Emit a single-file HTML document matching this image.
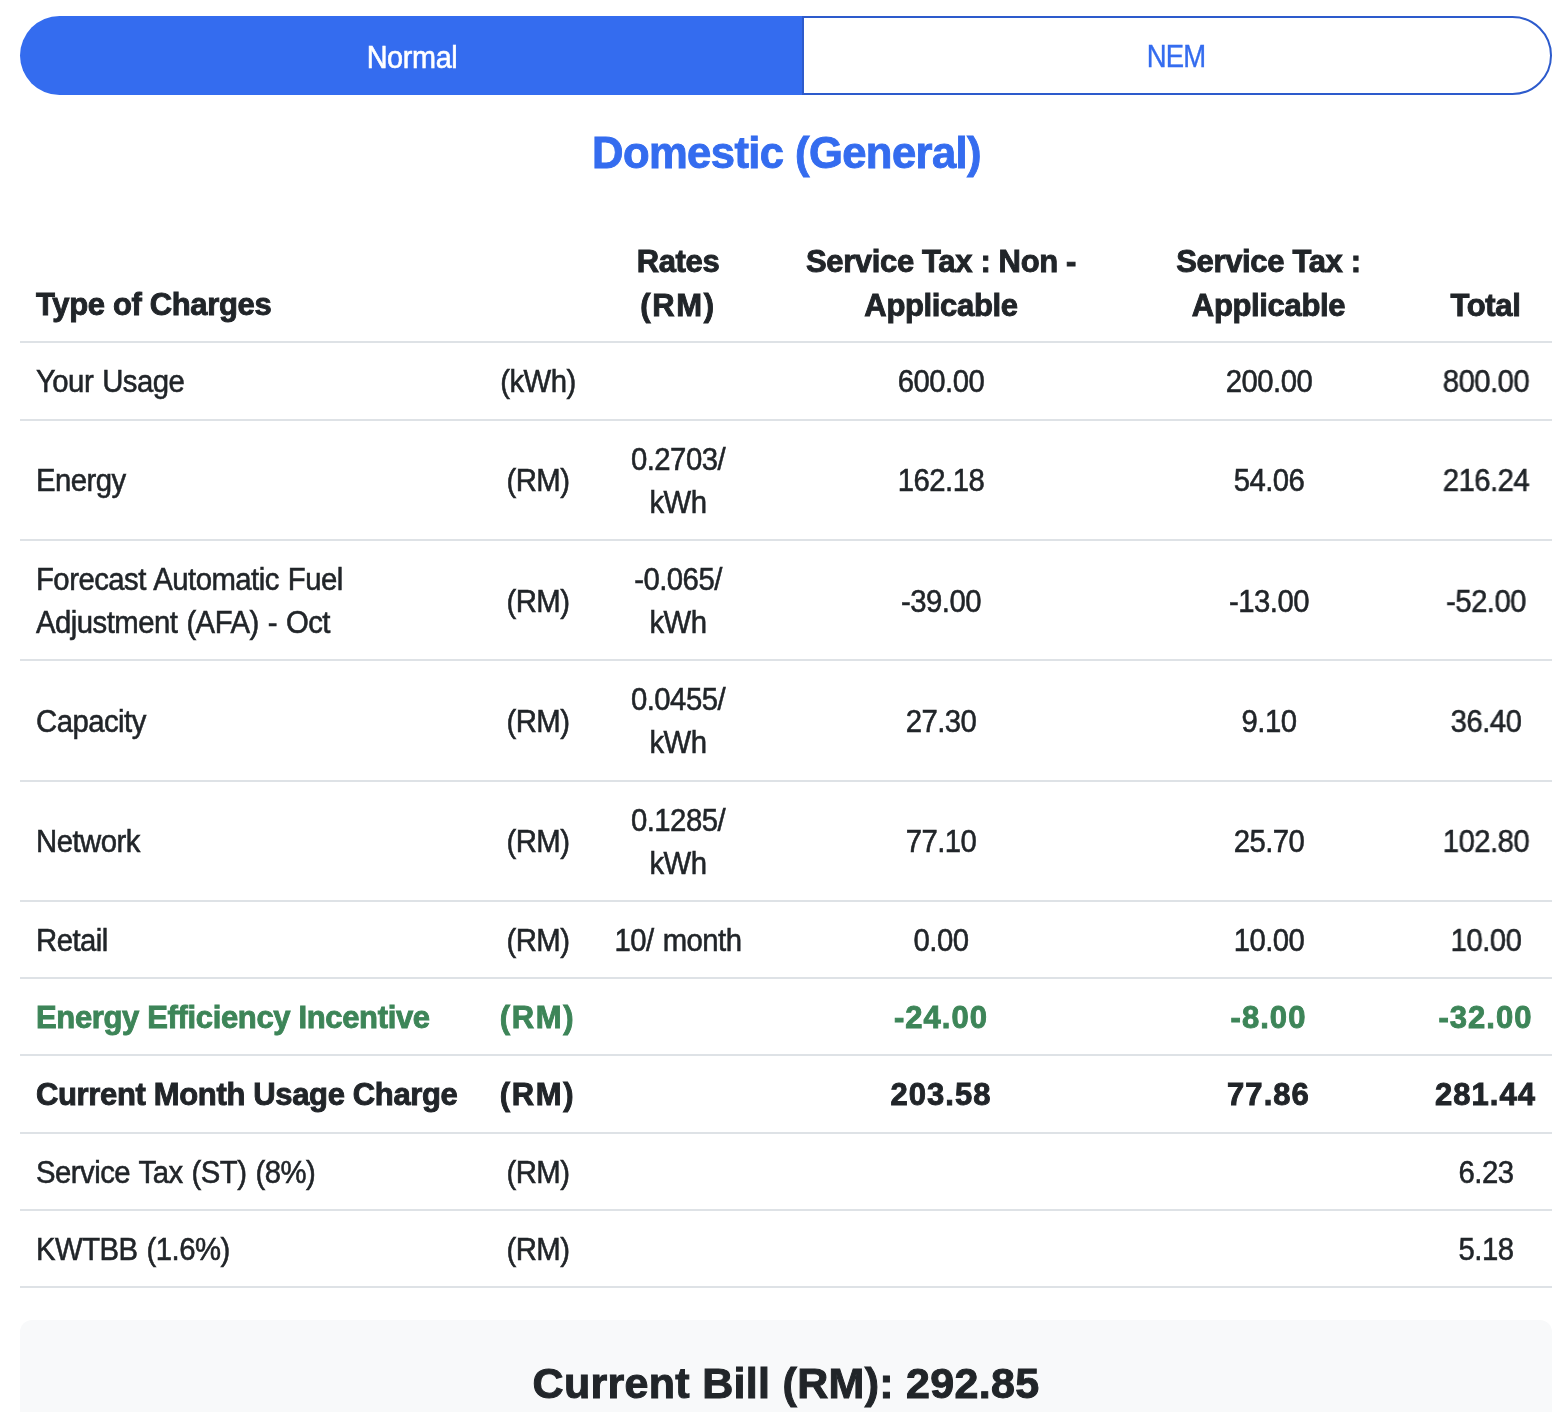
<!DOCTYPE html>
<html><head><meta charset="utf-8"><title>Domestic (General)</title>
<style>
html,body{margin:0;padding:0;background:#fff;}
body{width:1560px;height:1412px;position:relative;overflow:hidden;font-family:"Liberation Sans",sans-serif;color:#212529;}
.t{position:absolute;white-space:nowrap;line-height:60px;height:60px;}
.c{text-align:center;width:600px;}
.l{text-align:left;}
.r,.rp{font-size:31px;font-weight:400;letter-spacing:-0.55px;word-spacing:1.5px;-webkit-text-stroke:0.55px currentColor;transform:scaleX(0.945);}
.l{transform-origin:0 50%;}
.b,.hb{font-size:31px;font-weight:700;letter-spacing:-0.35px;-webkit-text-stroke:0.9px currentColor;}
.bp,.gp{font-size:31px;font-weight:700;letter-spacing:1.6px;-webkit-text-stroke:0.9px currentColor;}
.g{font-size:31px;font-weight:700;letter-spacing:-0.35px;color:#3d8558;-webkit-text-stroke:0.9px currentColor;}
.gp{color:#3d8558;}
.num{letter-spacing:1.05px;}
.hl{position:absolute;left:20px;width:1532px;height:2px;background:#dee2e6;}
.tog{position:absolute;left:20px;top:16px;width:1532px;height:79px;}
.tog .n{position:absolute;left:0;top:0;width:782px;height:79px;background:#346cef;border-radius:39.5px 0 0 39.5px;}
.tog .m{position:absolute;left:782px;top:0;width:750px;height:79px;box-sizing:border-box;border:2px solid #2d5bcc;border-radius:0 39.5px 39.5px 0;background:#fff;}
.title{font-size:43.6px;font-weight:700;letter-spacing:-0.6px;color:#346cef;-webkit-text-stroke:0.9px currentColor;}
.bill{position:absolute;left:20px;top:1320px;width:1532px;height:200px;background:#f8f9fa;border-radius:12px;}
.billt{font-size:43px;font-weight:700;letter-spacing:0.3px;color:#212529;-webkit-text-stroke:1px currentColor;}
.tn{font-size:31.5px;letter-spacing:-0.4px;transform:scaleX(0.915);color:#fff;-webkit-text-stroke:0.6px currentColor;}
.tm{font-size:30.5px;letter-spacing:-1px;transform:scaleX(0.9);color:#346cef;-webkit-text-stroke:0.4px currentColor;}
</style></head><body>
<div id="wrap" style="position:absolute;left:0;top:0;width:1560px;height:1412px;will-change:transform;">
<div class="tog"><div class="n"></div><div class="m"></div></div>

<div class="t c tn" style="left:111.5px;top:26.5px">Normal</div>
<div class="t c tm" style="left:876.0px;top:26.0px">NEM</div>
<div class="t c title" style="left:486.5px;top:122.5px">Domestic (General)</div>
<div class="hl" style="top:341px"></div>
<div class="hl" style="top:419px"></div>
<div class="hl" style="top:539px"></div>
<div class="hl" style="top:659px"></div>
<div class="hl" style="top:780px"></div>
<div class="hl" style="top:900px"></div>
<div class="hl" style="top:977px"></div>
<div class="hl" style="top:1054px"></div>
<div class="hl" style="top:1132px"></div>
<div class="hl" style="top:1209px"></div>
<div class="hl" style="top:1286px"></div>
<div class="bill"></div>
<div class="t l hb" style="left:36.0px;top:275.1px">Type of Charges</div>
<div class="t c hb" style="left:378.0px;top:232.0px">Rates</div>
<div class="t c bp" style="left:378.0px;top:276.1px">(RM)</div>
<div class="t c hb" style="left:641.0px;top:232.0px">Service Tax : Non -</div>
<div class="t c hb" style="left:641.0px;top:276.1px">Applicable</div>
<div class="t c hb" style="left:968.5px;top:232.0px">Service Tax :</div>
<div class="t c hb" style="left:968.5px;top:276.1px">Applicable</div>
<div class="t c hb" style="left:1185.5px;top:276.1px">Total</div>
<div class="t l r" style="left:36.0px;top:352.1px">Your Usage</div>
<div class="t c rp" style="left:237.5px;top:352.1px">(kWh)</div>
<div class="t c r" style="left:641.0px;top:352.1px">600.00</div>
<div class="t c r" style="left:968.5px;top:352.1px">200.00</div>
<div class="t c r" style="left:1185.5px;top:352.1px">800.00</div>
<div class="t l r" style="left:36.0px;top:451.1px">Energy</div>
<div class="t c rp" style="left:237.5px;top:451.1px">(RM)</div>
<div class="t c r" style="left:378.0px;top:429.6px">0.2703/</div>
<div class="t c r" style="left:378.0px;top:472.6px">kWh</div>
<div class="t c r" style="left:641.0px;top:451.1px">162.18</div>
<div class="t c r" style="left:968.5px;top:451.1px">54.06</div>
<div class="t c r" style="left:1185.5px;top:451.1px">216.24</div>
<div class="t l r" style="left:36.0px;top:550.1px">Forecast Automatic Fuel</div>
<div class="t l r" style="left:36.0px;top:593.1px">Adjustment (AFA) - Oct</div>
<div class="t c rp" style="left:237.5px;top:571.6px">(RM)</div>
<div class="t c r" style="left:378.0px;top:550.1px">-0.065/</div>
<div class="t c r" style="left:378.0px;top:593.1px">kWh</div>
<div class="t c r" style="left:641.0px;top:571.6px">-39.00</div>
<div class="t c r" style="left:968.5px;top:571.6px">-13.00</div>
<div class="t c r" style="left:1185.5px;top:571.6px">-52.00</div>
<div class="t l r" style="left:36.0px;top:691.6px">Capacity</div>
<div class="t c rp" style="left:237.5px;top:691.6px">(RM)</div>
<div class="t c r" style="left:378.0px;top:670.1px">0.0455/</div>
<div class="t c r" style="left:378.0px;top:713.1px">kWh</div>
<div class="t c r" style="left:641.0px;top:691.6px">27.30</div>
<div class="t c r" style="left:968.5px;top:691.6px">9.10</div>
<div class="t c r" style="left:1185.5px;top:691.6px">36.40</div>
<div class="t l r" style="left:36.0px;top:812.1px">Network</div>
<div class="t c rp" style="left:237.5px;top:812.1px">(RM)</div>
<div class="t c r" style="left:378.0px;top:790.6px">0.1285/</div>
<div class="t c r" style="left:378.0px;top:833.6px">kWh</div>
<div class="t c r" style="left:641.0px;top:812.1px">77.10</div>
<div class="t c r" style="left:968.5px;top:812.1px">25.70</div>
<div class="t c r" style="left:1185.5px;top:812.1px">102.80</div>
<div class="t l r" style="left:36.0px;top:910.6px">Retail</div>
<div class="t c rp" style="left:237.5px;top:910.6px">(RM)</div>
<div class="t c r" style="left:378.0px;top:910.6px">10/ month</div>
<div class="t c r" style="left:641.0px;top:910.6px">0.00</div>
<div class="t c r" style="left:968.5px;top:910.6px">10.00</div>
<div class="t c r" style="left:1185.5px;top:910.6px">10.00</div>
<div class="t l g" style="left:36.0px;top:987.6px">Energy Efficiency Incentive</div>
<div class="t c gp" style="left:237.5px;top:987.6px">(RM)</div>
<div class="t c g num" style="left:641.0px;top:987.6px">-24.00</div>
<div class="t c g num" style="left:968.5px;top:987.6px">-8.00</div>
<div class="t c g num" style="left:1185.5px;top:987.6px">-32.00</div>
<div class="t l b" style="left:36.0px;top:1065.1px">Current Month Usage Charge</div>
<div class="t c bp" style="left:237.5px;top:1065.1px">(RM)</div>
<div class="t c b num" style="left:641.0px;top:1065.1px">203.58</div>
<div class="t c b num" style="left:968.5px;top:1065.1px">77.86</div>
<div class="t c b num" style="left:1185.5px;top:1065.1px">281.44</div>
<div class="t l r" style="left:36.0px;top:1142.6px">Service Tax (ST) (8%)</div>
<div class="t c rp" style="left:237.5px;top:1142.6px">(RM)</div>
<div class="t c r" style="left:1185.5px;top:1142.6px">6.23</div>
<div class="t l r" style="left:36.0px;top:1219.6px">KWTBB (1.6%)</div>
<div class="t c rp" style="left:237.5px;top:1219.6px">(RM)</div>
<div class="t c r" style="left:1185.5px;top:1219.6px">5.18</div>
<div class="t c billt" style="left:486.0px;top:1353.0px">Current Bill (RM): 292.85</div>
</div></body></html>
